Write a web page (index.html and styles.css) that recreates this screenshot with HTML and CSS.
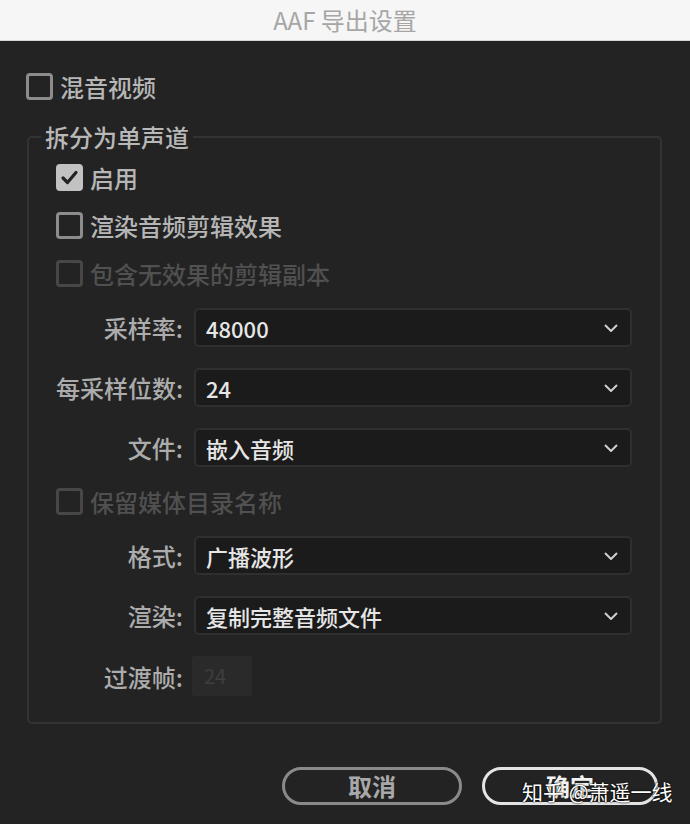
FILE: index.html
```html
<!DOCTYPE html>
<html lang="zh-CN">
<head>
    <meta charset="UTF-8">
    <title>AAF 导出设置</title>
    <link rel="stylesheet" href="styles.css">
</head>
<body>
    <div class="titlebar">AAF 导出设置</div>
    <div class="dialog">
        <label class="check"><span class="box"></span>混音视频</label>

        <fieldset class="group">
            <legend>拆分为单声道</legend>
            <div class="rows">
                <label class="check checked">
                    <span class="box">
                        <svg width="21" height="21" viewBox="0 0 21 21"><path d="M4 11 L8.5 15.5 L17 5.5" fill="none" stroke="#232323" stroke-width="3.2" stroke-linecap="round" stroke-linejoin="round"/></svg>
                    </span>启用
                </label>
                <label class="check"><span class="box"></span>渲染音频剪辑效果</label>
                <label class="check disabled"><span class="box"></span>包含无效果的剪辑副本</label>

                <div class="field">
                    <span class="label">采样率:</span>
                    <div class="select">48000<svg class="chev" width="14" height="8" viewBox="0 0 14 8"><path d="M1 1 L7 7 L13 1" fill="none" stroke="#cfcfcf" stroke-width="2"/></svg></div>
                </div>
                <div class="field">
                    <span class="label">每采样位数:</span>
                    <div class="select">24<svg class="chev" width="14" height="8" viewBox="0 0 14 8"><path d="M1 1 L7 7 L13 1" fill="none" stroke="#cfcfcf" stroke-width="2"/></svg></div>
                </div>
                <div class="field">
                    <span class="label">文件:</span>
                    <div class="select">嵌入音频<svg class="chev" width="14" height="8" viewBox="0 0 14 8"><path d="M1 1 L7 7 L13 1" fill="none" stroke="#cfcfcf" stroke-width="2"/></svg></div>
                </div>

                <label class="check disabled"><span class="box"></span>保留媒体目录名称</label>

                <div class="field">
                    <span class="label">格式:</span>
                    <div class="select">广播波形<svg class="chev" width="14" height="8" viewBox="0 0 14 8"><path d="M1 1 L7 7 L13 1" fill="none" stroke="#cfcfcf" stroke-width="2"/></svg></div>
                </div>
                <div class="field">
                    <span class="label">渲染:</span>
                    <div class="select">复制完整音频文件<svg class="chev" width="14" height="8" viewBox="0 0 14 8"><path d="M1 1 L7 7 L13 1" fill="none" stroke="#cfcfcf" stroke-width="2"/></svg></div>
                </div>
                <div class="field">
                    <span class="label">过渡帧:</span>
                    <div class="numbox">24</div>
                </div>
            </div>
        </fieldset>

        <div class="buttons">
            <button class="btn">取消</button>
            <button class="btn primary">确定</button>
        </div>
    </div>
    <div class="watermark">知乎 @萧遥一线</div>
</body>
</html>
```

FILE: styles.css
```css
body {
    margin: 0;
    height: 824px;
    overflow: hidden;
    position: relative;
    background-color: #232323;
    font-family: "Noto Sans CJK SC", "Noto Sans", sans-serif;
    font-size: 24px;
    color: #b4b4b4;
}
.titlebar {
    height: 40px;
    line-height: 40px;
    text-align: center;
    background: #f6f6f6;
    border-bottom: 1px solid #d4d4d4;
    color: #a6a6a6;
    font-size: 24px;
}
.dialog {
    padding: 32px 28px 0 26px;
}
.check {
    display: flex;
    align-items: center;
    gap: 7px;
    height: 27px;
    line-height: 27px;
    font-weight: 500;
    color: #b6b6b6;
    white-space: nowrap;
}
.box {
    width: 27px;
    height: 27px;
    box-sizing: border-box;
    border: 3px solid #8c8c8c;
    border-radius: 4px;
    display: flex;
    align-items: center;
    justify-content: center;
}
.checked .box {
    background: #c2c2c2;
    border-color: #c2c2c2;
}
.disabled {
    color: #505050;
}
.disabled .box {
    border-color: #474747;
}
.group {
    margin: 23px 0 0 1px;
    padding: 13px 28px 26px 27px;
    border: 2px solid #333333;
    border-radius: 5px;
}
.group legend {
    margin-left: -15px;
    padding: 0 4px;
    line-height: 28px;
    font-weight: 500;
    color: #b8b8b8;
}
.rows {
    display: flex;
    flex-direction: column;
    gap: 21px;
}
.field {
    display: grid;
    grid-template-columns: 127px 1fr;
    column-gap: 11px;
    align-items: center;
}
.label {
    text-align: right;
    white-space: nowrap;
    font-weight: 500;
    color: #acacac;
}
.select {
    height: 39px;
    box-sizing: border-box;
    background: #1b1b1b;
    border: 2px solid #2f2f2f;
    border-radius: 5px;
    padding: 0 12px 0 10px;
    display: flex;
    align-items: center;
    justify-content: space-between;
    color: #e6e6e6;
    font-weight: 500;
    font-size: 22px;
}
.chev {
    flex: none;
}
.numbox {
    width: 60px;
    height: 40px;
    margin-left: -2px;
    box-sizing: border-box;
    background: #2a2a2a;
    border-radius: 3px;
    padding-left: 12px;
    line-height: 40px;
    font-size: 20px;
    color: #3e3e3e;
}
.buttons {
    display: flex;
    justify-content: flex-end;
    gap: 20px;
    margin-top: 43px;
    padding-right: 4px;
}
.btn {
    width: 180px;
    height: 38px;
    box-sizing: border-box;
    border: 3px solid #8a8a8a;
    border-radius: 19px;
    background: transparent;
    color: #a8a8a8;
    font-family: inherit;
    font-size: 24px;
    font-weight: 700;
    line-height: 30px;
    padding: 0;
}
.btn.primary {
    width: 176px;
    border-color: #e4e4e4;
    color: #f2f2f2;
}
.watermark {
    position: absolute;
    left: 522px;
    top: 779px;
    font-size: 21px;
    line-height: 24px;
    color: #ffffff;
    text-shadow: 0 0 2px #000, 0 0 1px #000;
}
```
